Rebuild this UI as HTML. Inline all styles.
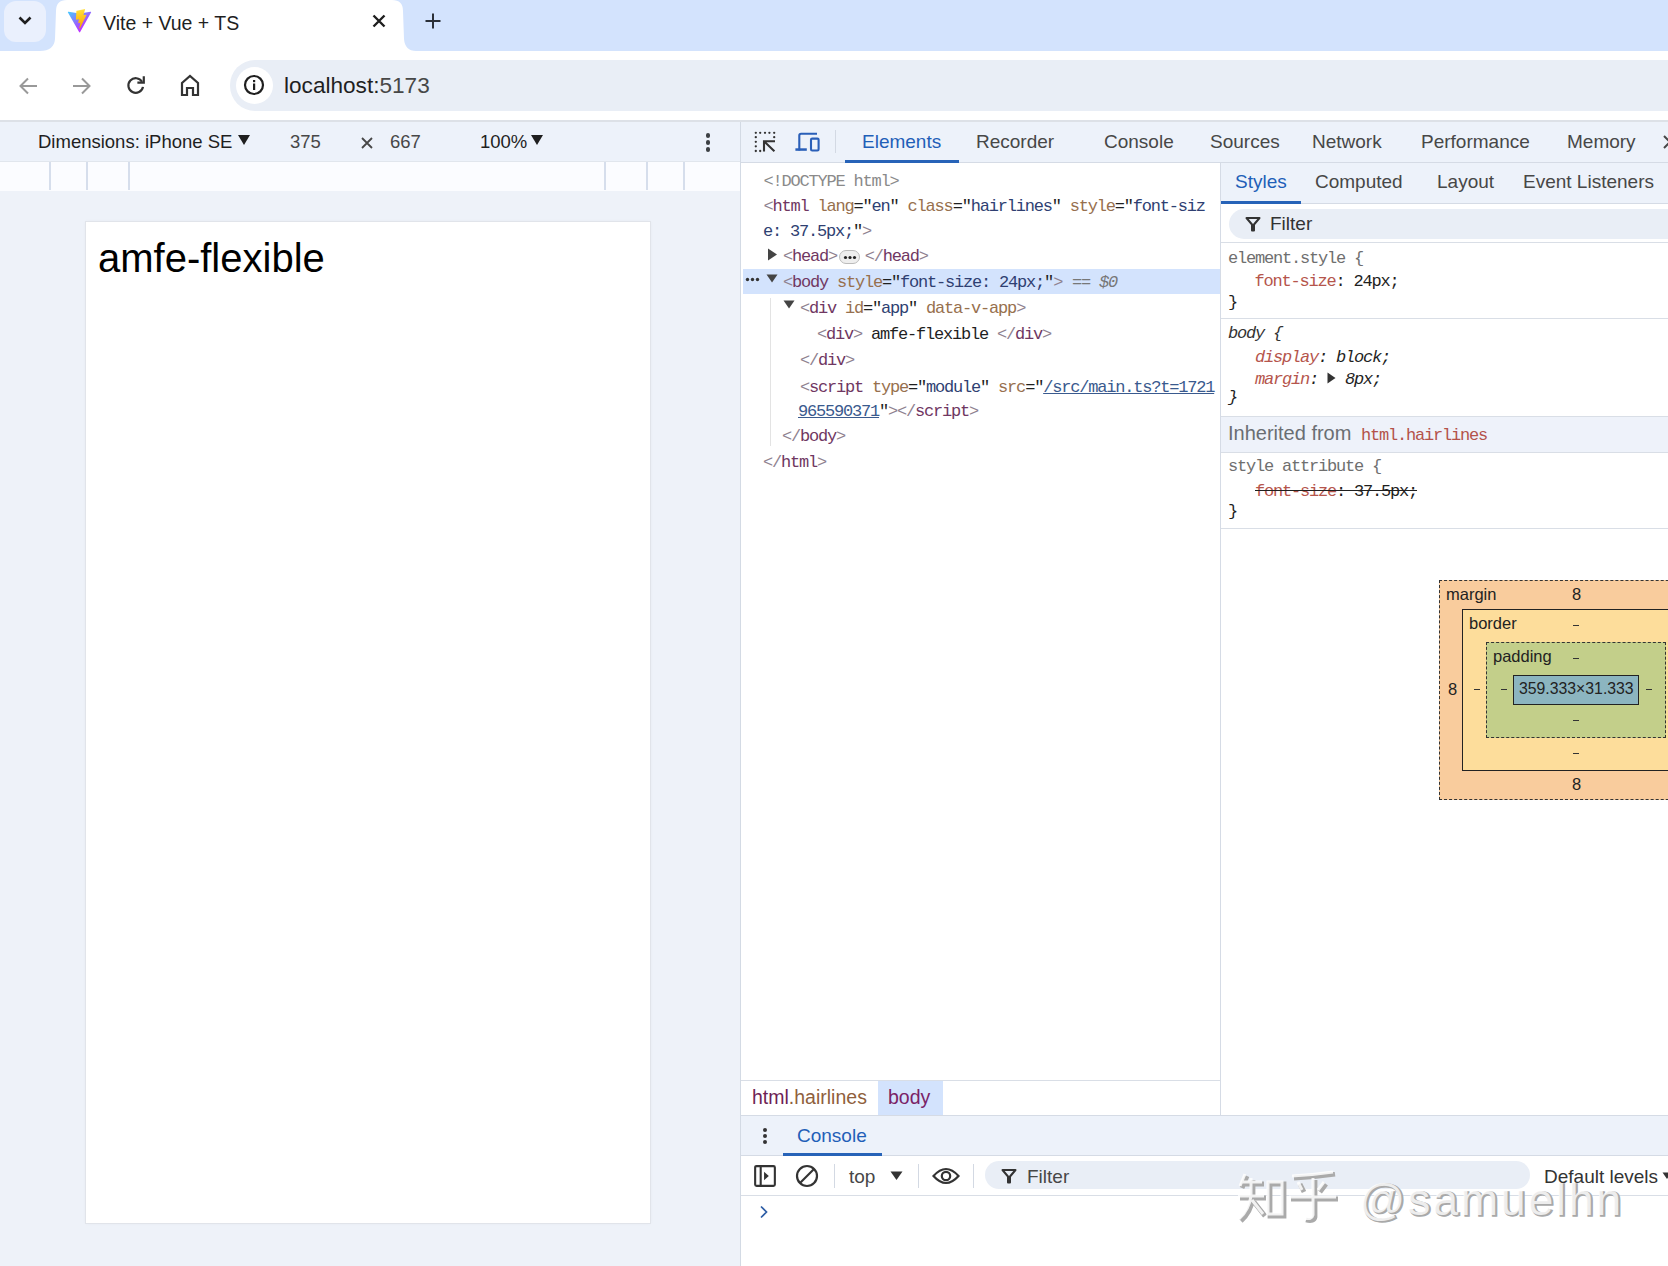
<!DOCTYPE html>
<html><head><meta charset="utf-8">
<style>
*{margin:0;padding:0;box-sizing:border-box}
html,body{width:1668px;height:1266px;overflow:hidden;background:#fff;font-family:"Liberation Sans",sans-serif;color:#1f1f1f}
.a{position:absolute}
.t{position:absolute;white-space:nowrap;line-height:1}
.mono{font-family:"Liberation Mono",monospace;font-size:17px;letter-spacing:-1.2px;white-space:pre;position:absolute;line-height:1}
.tg{color:#703762}.br{color:#8f8290}.an{color:#97704e}.av{color:#2f3f72}.lk{color:#3a5a8e;text-decoration:underline}.pn{color:#b5554c}
</style></head><body>

<!-- TAB STRIP -->
<div class="a" style="left:0;top:0;width:1668px;height:51px;background:#d3e3fd"></div>
<div class="a" style="left:4px;top:1px;width:42px;height:41px;border-radius:12px;background:#eaf0fd"></div>
<svg class="a" style="left:17px;top:14px" width="16" height="12" viewBox="0 0 16 12"><path d="M2.5 3.5 L8 9 L13.5 3.5" fill="none" stroke="#1f1f1f" stroke-width="2.6"/></svg>
<!-- active tab -->
<svg class="a" style="left:40px;top:0" width="390" height="51" viewBox="0 0 390 51">
<path d="M0 51 Q14 51 15 39 L16 11 Q16 0 27 0 L352 0 Q363 0 363 11 L364 39 Q365 51 376 51 Z" fill="#fff"/>
</svg>
<svg class="a" style="left:66.5px;top:9px" width="25" height="24" viewBox="0 0 410 404">
<defs><linearGradient id="vg1" x1="6" y1="33" x2="235" y2="344" gradientUnits="userSpaceOnUse"><stop offset="0" stop-color="#41d1ff"/><stop offset="1" stop-color="#bd34fe"/></linearGradient>
<linearGradient id="vg2" x1="194.65" y1="8.8" x2="236.08" y2="292.99" gradientUnits="userSpaceOnUse"><stop offset="0" stop-color="#ffea83"/><stop offset=".083" stop-color="#ffdd35"/><stop offset="1" stop-color="#ffa800"/></linearGradient></defs>
<path d="M399.641 59.5246L215.643 388.545C211.844 395.338 202.084 395.378 198.228 388.618L10.5817 59.5563C6.38087 52.1896 12.6802 43.2665 21.0281 44.7586L205.223 77.6824C206.398 77.8924 207.601 77.8904 208.776 77.6763L389.119 44.8058C397.439 43.2894 403.768 52.1434 399.641 59.5246Z" fill="url(#vg1)"/>
<path d="M292.965 1.5744L156.801 28.2552C154.563 28.6937 152.906 30.5903 152.771 32.8664L144.395 174.33C144.198 177.662 147.258 180.248 150.51 179.498L188.42 170.749C191.967 169.931 195.172 173.055 194.443 176.622L183.18 231.775C182.422 235.487 185.907 238.661 189.532 237.56L212.947 230.446C216.577 229.344 220.065 232.527 219.297 236.242L201.398 322.875C200.278 328.294 207.486 331.249 210.492 326.603L212.5 323.5L323.454 102.072C325.312 98.3645 322.108 94.137 318.036 94.9228L279.014 102.454C275.347 103.161 272.227 99.746 273.262 96.1583L298.731 7.86689C299.767 4.27314 296.636 0.855181 292.965 1.5744Z" fill="url(#vg2)"/>
</svg>
<div class="t" style="left:103px;top:14px;font-size:19.5px;color:#1f1f1f">Vite + Vue + TS</div>
<svg class="a" style="left:371px;top:13px" width="16" height="16" viewBox="0 0 16 16"><path d="M2.5 2.5 L13.5 13.5 M13.5 2.5 L2.5 13.5" stroke="#1f1f1f" stroke-width="2.4"/></svg>
<svg class="a" style="left:424px;top:12px" width="18" height="18" viewBox="0 0 18 18"><path d="M9 1.5 V16.5 M1.5 9 H16.5" stroke="#2b3038" stroke-width="2"/></svg>

<!-- TOOLBAR -->
<div class="a" style="left:0;top:51px;width:1668px;height:69px;background:#fff"></div>
<div class="a" style="left:0;top:120px;width:1668px;height:2px;background:#dde1e7"></div>
<svg class="a" style="left:17px;top:75px" width="24" height="22" viewBox="0 0 24 22"><path d="M20 11 H4 M11 3.5 L3.5 11 L11 18.5" fill="none" stroke="#999" stroke-width="2"/></svg>
<svg class="a" style="left:69px;top:75px" width="24" height="22" viewBox="0 0 24 22"><path d="M4 11 H20 M13 3.5 L20.5 11 L13 18.5" fill="none" stroke="#999" stroke-width="2"/></svg>
<svg class="a" style="left:125px;top:74px" width="22" height="22" viewBox="0 0 24 24"><path d="M18.6 8.5 A8 8 0 1 0 19.6 14" fill="none" stroke="#333" stroke-width="2.4"/><path d="M13.5 9.5 H20.5 V2.5" fill="none" stroke="#333" stroke-width="2.4"/></svg>
<svg class="a" style="left:178px;top:73px" width="24" height="24" viewBox="0 0 24 24"><path d="M4 22 V10 L12 3 L20 10 V22 H15 V15 H9 V22 Z" fill="none" stroke="#333" stroke-width="2.2" stroke-linejoin="miter"/></svg>
<!-- omnibox -->
<div class="a" style="left:230px;top:60px;width:1500px;height:50.5px;border-radius:25px;background:#e9eef6"></div>
<div class="a" style="left:236px;top:67px;width:37px;height:37px;border-radius:50%;background:#fff"></div>
<svg class="a" style="left:243px;top:74px" width="22" height="22" viewBox="0 0 22 22"><circle cx="11" cy="11" r="9" fill="none" stroke="#1f1f1f" stroke-width="2.2"/><rect x="10" y="9.5" width="2.2" height="6.5" fill="#1f1f1f"/><rect x="10" y="6" width="2.2" height="2.2" fill="#1f1f1f"/></svg>
<div class="t" style="left:284px;top:75px;font-size:22.6px;color:#1f1f1f">localhost:<span style="color:#474747">5173</span></div>

<!-- LEFT DEVICE PANEL -->
<div class="a" style="left:0;top:122px;width:740px;height:39px;background:#edf2fa"></div>
<div class="t" style="left:38px;top:133px;font-size:18.5px;color:#1f1f1f">Dimensions: iPhone SE</div>
<svg class="a" style="left:238px;top:135px" width="12" height="11" viewBox="0 0 12 11"><path d="M0 0 H12 L6 10 Z" fill="#1f1f1f"/></svg>
<div class="t" style="left:290px;top:133px;font-size:18.5px;color:#474747">375</div>
<svg class="a" style="left:361px;top:137px" width="12" height="12" viewBox="0 0 12 12"><path d="M1 1 L11 11 M11 1 L1 11" stroke="#474747" stroke-width="1.8"/></svg>
<div class="t" style="left:390px;top:133px;font-size:18.5px;color:#474747">667</div>
<div class="t" style="left:480px;top:133px;font-size:18.5px;color:#1f1f1f">100%</div>
<svg class="a" style="left:531px;top:135px" width="12" height="11" viewBox="0 0 12 11"><path d="M0 0 H12 L6 10 Z" fill="#1f1f1f"/></svg>
<div class="a" style="left:705.5px;top:133px;width:4.5px;height:4.5px;border-radius:50%;background:#3c4043"></div>
<div class="a" style="left:705.5px;top:140px;width:4.5px;height:4.5px;border-radius:50%;background:#3c4043"></div>
<div class="a" style="left:705.5px;top:147px;width:4.5px;height:4.5px;border-radius:50%;background:#3c4043"></div>
<!-- media bar -->
<div class="a" style="left:0;top:161px;width:740px;height:31px;background:#fbfcff;border-top:1px solid #e1e6ed;border-bottom:1px solid #dde2e9"></div>
<div class="a" style="left:49px;top:162px;width:2px;height:28px;background:#d6deec"></div>
<div class="a" style="left:86px;top:162px;width:2px;height:28px;background:#d6deec"></div>
<div class="a" style="left:128px;top:162px;width:2px;height:28px;background:#d6deec"></div>
<div class="a" style="left:604px;top:162px;width:2px;height:28px;background:#d6deec"></div>
<div class="a" style="left:646px;top:162px;width:2px;height:28px;background:#d6deec"></div>
<div class="a" style="left:683px;top:162px;width:2px;height:28px;background:#d6deec"></div>
<!-- viewport -->
<div class="a" style="left:0;top:191px;width:740px;height:1075px;background:#eef2f9"></div>
<div class="a" style="left:86px;top:222px;width:564px;height:1001px;background:#fff;box-shadow:0 0 0 1px #e1e4ea,0 0 4px rgba(0,0,0,.06)"></div>
<div class="t" style="left:98px;top:238px;font-size:40px;color:#000">amfe-flexible</div>
<div class="a" style="left:740px;top:122px;width:1px;height:1144px;background:#d3dae4"></div>

<!-- DEVTOOLS -->

<!-- main tab bar -->
<div class="a" style="left:741px;top:122px;width:927px;height:41px;background:#edf2fa;border-bottom:1px solid #d5dbe5"></div>
<svg class="a" style="left:745px;top:125px" width="90" height="35" viewBox="0 0 90 35">
<g fill="#333"><circle cx="10.8" cy="7.8" r="1.15"/><circle cx="15.2" cy="7.8" r="1.15"/><circle cx="20.0" cy="7.8" r="1.15"/><circle cx="24.4" cy="7.8" r="1.15"/><circle cx="29.2" cy="7.8" r="1.15"/><circle cx="10.8" cy="12.2" r="1.15"/><circle cx="29.2" cy="12.2" r="1.15"/><circle cx="10.8" cy="16.8" r="1.15"/><circle cx="10.8" cy="21.3" r="1.15"/><circle cx="10.8" cy="26.0" r="1.15"/><circle cx="15.2" cy="26.0" r="1.15"/></g>
<path d="M30 16.2 H19 V26.4 M19 16.2 L29.4 26.2" fill="none" stroke="#333" stroke-width="2.1"/>
<path d="M54.3 25.5 V10.5 Q54.3 8.7 56.1 8.7 H72" fill="none" stroke="#2a5fb8" stroke-width="2.1"/>
<rect x="50.4" y="23.3" width="11.4" height="2.5" fill="#2a5fb8"/>
<rect x="66" y="13.6" width="7.6" height="11.9" rx="1.2" fill="none" stroke="#2a5fb8" stroke-width="2.1"/>
</svg>
<div class="a" style="left:834.5px;top:130px;width:1px;height:23px;background:#d3d9e3"></div>
<div class="t" style="left:862px;top:131.5px;font-size:19px;color:#1f5fb8">Elements</div>
<div class="a" style="left:845px;top:160px;width:114px;height:3px;background:#2763b8"></div>
<div class="t" style="left:976px;top:131.5px;font-size:19px;color:#474747">Recorder</div>
<div class="t" style="left:1104px;top:131.5px;font-size:19px;color:#474747">Console</div>
<div class="t" style="left:1210px;top:131.5px;font-size:19px;color:#474747">Sources</div>
<div class="t" style="left:1312px;top:131.5px;font-size:19px;color:#474747">Network</div>
<div class="t" style="left:1421px;top:131.5px;font-size:19px;color:#474747">Performance</div>
<div class="t" style="left:1567px;top:131.5px;font-size:19px;color:#474747">Memory</div>
<svg class="a" style="left:1663px;top:134px" width="10" height="16" viewBox="0 0 10 16"><path d="M1 2 L7 8 L1 14" fill="none" stroke="#474747" stroke-width="2"/></svg>

<!-- elements tree -->
<div class="a" style="left:741px;top:163px;width:479px;height:917px;background:#fff"></div>
<div class="a" style="left:743px;top:269px;width:477px;height:25px;background:#d3e3fd"></div>
<div class="a" style="left:770px;top:298px;width:1px;height:148px;background:#e3e3e3"></div>
<div class="mono" style="left:763.5px;top:172.9px"><span style="color:#8a8a8a">&lt;!DOCTYPE html&gt;</span></div>
<div class="mono" style="left:763.5px;top:197.5px"><span class="br">&lt;</span><span class="tg">html</span> <span class="an">lang</span>="<span class="av">en</span>" <span class="an">class</span>="<span class="av">hairlines</span>" <span class="an">style</span>="<span class="av">font-siz</span></div>
<div class="mono" style="left:763px;top:222.8px"><span class="av">e: 37.5px;</span>"<span class="br">&gt;</span></div>
<div class="mono" style="left:783px;top:248.3px"><span class="br">&lt;</span><span class="tg">head</span><span class="br">&gt;</span></div>
<div class="mono" style="left:864.7px;top:248.3px"><span class="br">&lt;/</span><span class="tg">head</span><span class="br">&gt;</span></div>
<div class="mono" style="left:783px;top:273.9px"><span class="br">&lt;</span><span class="tg">body</span> <span class="an">style</span>="<span class="av">font-size: 24px;</span>"<span class="br">&gt;</span></div>
<div class="mono" style="left:1072px;top:273.9px"><span style="color:#777;font-style:italic">== $0</span></div>
<div class="mono" style="left:800px;top:300.4px"><span class="br">&lt;</span><span class="tg">div</span> <span class="an">id</span>="<span class="av">app</span>" <span class="an">data-v-app</span><span class="br">&gt;</span></div>
<div class="mono" style="left:817px;top:326.2px"><span class="br">&lt;</span><span class="tg">div</span><span class="br">&gt;</span> amfe-flexible <span class="br">&lt;/</span><span class="tg">div</span><span class="br">&gt;</span></div>
<div class="mono" style="left:800px;top:352.0px"><span class="br">&lt;/</span><span class="tg">div</span><span class="br">&gt;</span></div>
<div class="mono" style="left:800px;top:379.0px"><span class="br">&lt;</span><span class="tg">script</span> <span class="an">type</span>="<span class="av">module</span>" <span class="an">src</span>="<span class="lk">/src/main.ts?t=1721</span></div>
<div class="mono" style="left:798px;top:402.6px"><span class="lk">965590371</span>"<span class="br">&gt;</span><span class="br">&lt;/</span><span class="tg">script</span><span class="br">&gt;</span></div>
<div class="mono" style="left:782px;top:428.4px"><span class="br">&lt;/</span><span class="tg">body</span><span class="br">&gt;</span></div>
<div class="mono" style="left:763px;top:454.0px"><span class="br">&lt;/</span><span class="tg">html</span><span class="br">&gt;</span></div>
<svg class="a" style="left:767px;top:248px" width="11" height="13" viewBox="0 0 11 13"><path d="M1 0.5 L10 6.5 L1 12.5 Z" fill="#444"/></svg>
<svg class="a" style="left:766px;top:274px" width="12" height="9" viewBox="0 0 12 9"><path d="M0.5 0.5 H11.5 L6 8.5 Z" fill="#444"/></svg>
<svg class="a" style="left:783px;top:300px" width="12" height="9" viewBox="0 0 12 9"><path d="M0.5 0.5 H11.5 L6 8.5 Z" fill="#444"/></svg>
<div class="a" style="left:839px;top:250px;width:21px;height:14px;border-radius:7px;background:#eee;border:1px solid #bbb"></div>
<svg class="a" style="left:843px;top:255px" width="14" height="5" viewBox="0 0 14 5"><circle cx="2.5" cy="2.5" r="1.6" fill="#222"/><circle cx="7" cy="2.5" r="1.6" fill="#222"/><circle cx="11.5" cy="2.5" r="1.6" fill="#222"/></svg>
<svg class="a" style="left:745px;top:277px" width="15" height="5" viewBox="0 0 15 5"><circle cx="2.5" cy="2.5" r="1.7" fill="#333"/><circle cx="7.5" cy="2.5" r="1.7" fill="#333"/><circle cx="12.5" cy="2.5" r="1.7" fill="#333"/></svg>

<div class="a" style="left:1220px;top:163px;width:1px;height:952px;background:#d5dbe5"></div>

<!-- styles pane -->
<div class="a" style="left:1221px;top:163px;width:447px;height:41px;background:#edf2fa;border-bottom:1px solid #d5dbe5"></div>
<div class="t" style="left:1235px;top:171.8px;font-size:19px;color:#1f5fb8">Styles</div>
<div class="a" style="left:1221px;top:201px;width:80px;height:3px;background:#2763b8"></div>
<div class="t" style="left:1315px;top:171.8px;font-size:19px;color:#474747">Computed</div>
<div class="t" style="left:1437px;top:171.8px;font-size:19px;color:#474747">Layout</div>
<div class="t" style="left:1523px;top:171.8px;font-size:19px;color:#474747">Event Listeners</div>
<div class="a" style="left:1229px;top:209px;width:500px;height:30px;border-radius:15px;background:#e9eef6"></div>
<svg class="a" style="left:1245px;top:216px" width="16" height="16" viewBox="0 0 16 16"><path d="M1.5 2 H14.5 L9 8.5 V14.5 H7 V8.5 Z" fill="none" stroke="#333" stroke-width="2" stroke-linejoin="round"/></svg>
<div class="t" style="left:1270px;top:214px;font-size:19px;color:#333">Filter</div>
<div class="a" style="left:1221px;top:242px;width:447px;height:1px;background:#d9dee6"></div>
<div class="mono" style="left:1228px;top:249.7px"><span style="color:#6f6f6f">element.style {</span></div>
<div class="mono" style="left:1254.5px;top:273.2px"><span class="pn">font-size</span>: 24px;</div>
<div class="mono" style="left:1228px;top:293.8px">}</div>
<div class="a" style="left:1221px;top:318px;width:447px;height:1px;background:#d9dee6"></div>
<div class="mono" style="left:1228px;top:325.0px;font-style:italic"><span style="color:#333">body {</span></div>
<div class="mono" style="left:1255px;top:349.3px;font-style:italic"><span class="pn">display</span>: block;</div>
<div class="mono" style="left:1255px;top:370.6px;font-style:italic"><span class="pn">margin</span>:   8px;</div>
<svg class="a" style="left:1327px;top:372px" width="9" height="12" viewBox="0 0 9 12"><path d="M0.5 0.5 L8.5 6 L0.5 11.5 Z" fill="#333"/></svg>
<div class="mono" style="left:1228px;top:389.0px;font-style:italic">}</div>
<div class="a" style="left:1221px;top:416px;width:447px;height:37px;background:#eef2fa;border-top:1px solid #d9dee6;border-bottom:1px solid #d9dee6"></div>
<div class="t" style="left:1228px;top:423px;font-size:20px;color:#6a6e73">Inherited from</div>
<div class="mono" style="left:1361px;top:427.3px"><span style="color:#b4524a">html.hairlines</span></div>
<div class="mono" style="left:1228px;top:458.4px"><span style="color:#6f6f6f">style attribute {</span></div>
<div class="mono" style="left:1255px;top:482.5px"><span style="text-decoration:line-through"><span class="pn">font-size</span>: 37.5px;</span></div>
<div class="mono" style="left:1228px;top:503.0px">}</div>
<div class="a" style="left:1221px;top:528px;width:447px;height:1px;background:#d9dee6"></div>




<!-- box model -->
<div class="a" style="left:1439px;top:580px;width:260px;height:220px;background:#f9cc9d;border:1px dashed #333"></div>
<div class="a" style="left:1462px;top:609px;width:240px;height:162px;background:#fddd9b;border:1px solid #222"></div>
<div class="a" style="left:1486px;top:642px;width:180px;height:96px;background:#c3cf8a;border:1px dashed #333"></div>
<div class="a" style="left:1513px;top:675px;width:126px;height:30px;background:#8cb5c0;border:1px solid #222"></div>
<div class="t" style="left:1446px;top:586px;font-size:16.5px;color:#222">margin</div>
<div class="t" style="left:1572px;top:586px;font-size:16.5px;color:#222">8</div>
<div class="t" style="left:1469px;top:615px;font-size:16.5px;color:#222">border</div>
<div class="t" style="left:1493px;top:648px;font-size:16.5px;color:#222">padding</div>
<div class="t" style="left:1519px;top:681px;font-size:15.8px;color:#222">359.333×31.333</div>
<div class="t" style="left:1448px;top:681px;font-size:16.5px;color:#222">8</div>
<div class="t" style="left:1572px;top:776px;font-size:16.5px;color:#222">8</div>

<div class="a" style="left:1573px;top:624.5px;width:6px;height:1.6px;background:#333"></div>
<div class="a" style="left:1573px;top:657.5px;width:6px;height:1.6px;background:#333"></div>
<div class="a" style="left:1474px;top:688.5px;width:6px;height:1.6px;background:#333"></div>
<div class="a" style="left:1501px;top:688.5px;width:6px;height:1.6px;background:#333"></div>
<div class="a" style="left:1646px;top:688.5px;width:6px;height:1.6px;background:#333"></div>
<div class="a" style="left:1573px;top:719.5px;width:6px;height:1.6px;background:#333"></div>
<div class="a" style="left:1573px;top:752.5px;width:6px;height:1.6px;background:#333"></div>
<!-- breadcrumb -->
<div class="a" style="left:741px;top:1080px;width:479px;height:35px;background:#fff;border-top:1px solid #d9dee6"></div>
<div class="t" style="left:752px;top:1088px;font-size:19.5px;color:#6e1f55">html<span style="color:#8f5f3c">.hairlines</span></div>
<div class="a" style="left:878px;top:1081px;width:65px;height:34px;background:#d3e3fd"></div>
<div class="t" style="left:888px;top:1088px;font-size:19.5px;color:#7a2266">body</div>

<!-- console drawer -->
<div class="a" style="left:741px;top:1115px;width:927px;height:41px;background:#edf2fa;border-top:1px solid #d5dbe5;border-bottom:1px solid #d5dbe5"></div>
<div class="a" style="left:763px;top:1128px;width:4px;height:4px;border-radius:50%;background:#333"></div>
<div class="a" style="left:763px;top:1134px;width:4px;height:4px;border-radius:50%;background:#333"></div>
<div class="a" style="left:763px;top:1140px;width:4px;height:4px;border-radius:50%;background:#333"></div>
<div class="t" style="left:797px;top:1126px;font-size:19px;color:#1f5fb8">Console</div>
<div class="a" style="left:783px;top:1153px;width:99px;height:3px;background:#2763b8"></div>
<div class="a" style="left:741px;top:1156px;width:927px;height:40px;background:#fff;border-bottom:1px solid #d9dee6"></div>
<svg class="a" style="left:754px;top:1165px" width="22" height="22" viewBox="0 0 23 23"><rect x="1.2" y="1.2" width="20.6" height="20.6" rx="1.5" fill="none" stroke="#333" stroke-width="2.2"/><path d="M7 1 V22" stroke="#333" stroke-width="2.2"/><path d="M10.5 7 L15.5 11.5 L10.5 16 Z" fill="#333"/></svg>
<svg class="a" style="left:795px;top:1164px" width="24" height="24" viewBox="0 0 24 24"><circle cx="12" cy="12" r="10" fill="none" stroke="#333" stroke-width="2.2"/><path d="M5 19 L19 5" stroke="#333" stroke-width="2.2"/></svg>
<div class="a" style="left:834px;top:1164px;width:1px;height:24px;background:#d3d9e3"></div>
<div class="t" style="left:849px;top:1167px;font-size:19px;color:#474747">top</div>
<svg class="a" style="left:890px;top:1171px" width="13" height="10" viewBox="0 0 13 10"><path d="M0.5 0.5 H12.5 L6.5 9 Z" fill="#333"/></svg>
<div class="a" style="left:918px;top:1164px;width:1px;height:24px;background:#d3d9e3"></div>
<svg class="a" style="left:932px;top:1166px" width="28" height="20" viewBox="0 0 28 20"><path d="M1.5 10 Q14 -4 26.5 10 Q14 24 1.5 10 Z" fill="none" stroke="#333" stroke-width="2.2"/><circle cx="14" cy="10" r="4.2" fill="none" stroke="#333" stroke-width="2.2"/></svg>
<div class="a" style="left:973px;top:1164px;width:1px;height:24px;background:#d3d9e3"></div>
<div class="a" style="left:985px;top:1161px;width:545px;height:28px;border-radius:14px;background:#e9eef6"></div>
<svg class="a" style="left:1001px;top:1168px" width="16" height="16" viewBox="0 0 16 16"><path d="M1.5 2 H14.5 L9 8.5 V14.5 H7 V8.5 Z" fill="none" stroke="#333" stroke-width="2" stroke-linejoin="round"/></svg>
<div class="t" style="left:1027px;top:1166.5px;font-size:19px;color:#474747">Filter</div>
<div class="t" style="left:1544px;top:1167px;font-size:19px;color:#333">Default levels</div>
<svg class="a" style="left:1662px;top:1172px" width="10" height="8" viewBox="0 0 10 8"><path d="M0.5 0.5 H9.5 L5 7 Z" fill="#333"/></svg>
<svg class="a" style="left:759px;top:1205px" width="10" height="14" viewBox="0 0 10 14"><path d="M2 1.5 L7.5 7 L2 12.5" fill="none" stroke="#2d5da6" stroke-width="1.7"/></svg>

<!-- watermark -->
<div class="t" style="left:1361px;top:1178px;font-size:45px;letter-spacing:2.6px;color:#a9a9a9;-webkit-text-stroke:1.4px #a9a9a9">@samuelhn</div>
<div class="t" style="left:1359.5px;top:1176.5px;font-size:45px;letter-spacing:2.6px;color:#fff;opacity:.8">@samuelhn</div>
<svg class="a" style="left:1238px;top:1172px" width="104" height="52" viewBox="0 0 104 52">
<g fill="none" stroke="#aaaaaa" stroke-width="4.8" stroke-linecap="butt">
<path d="M9 4 L4 16 M6 12 H26 M2 26 H28 M15 8 V26 Q13 40 3 49 M16 30 L27 44"/>
<path d="M32 12 H46 V44 H32 Z"/>
<path d="M56 6 Q76 5 97 2 M62 12 L66 20 M88 12 L82 20 M53 27 H100 M77 8 V45 Q76 50 68 48"/>
</g></svg>
<svg class="a" style="left:1236px;top:1170px" width="104" height="52" viewBox="0 0 104 52">
<g fill="none" stroke="#fff" stroke-width="3" opacity=".85" stroke-linecap="butt">
<path d="M9 4 L4 16 M6 12 H26 M2 26 H28 M15 8 V26 Q13 40 3 49 M16 30 L27 44"/>
<path d="M32 12 H46 V44 H32 Z"/>
<path d="M56 6 Q76 5 97 2 M62 12 L66 20 M88 12 L82 20 M53 27 H100 M77 8 V45 Q76 50 68 48"/>
</g></svg>
</body></html>
